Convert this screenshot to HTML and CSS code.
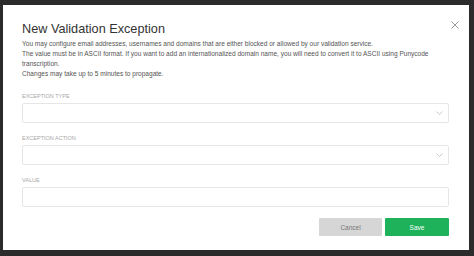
FILE: index.html
```html
<!DOCTYPE html>
<html lang="en">
  <head>
    <meta charset="UTF-8" />
    <title>New Validation Exception</title>
    <link rel="stylesheet" href="styles.css">
  </head>
  <body>
    <div class="modal">
      <button class="close-btn" aria-label="Close">
        <svg width="8" height="8" viewBox="0 0 8 8">
          <path d="M0.5 0.5 L7.5 7.5 M7.5 0.5 L0.5 7.5" stroke="#9a9a9a" stroke-width="1" fill="none" />
        </svg>
      </button>
      <h1 class="modal-title">New Validation Exception</h1>
      <div class="modal-desc">
        <p>You may configure email addresses, usernames and domains that are either blocked or allowed by our validation service.</p>
        <p>The value must be in ASCII format. If you want to add an internationalized domain name, you will need to convert it to ASCII using Punycode transcription.</p>
        <p>Changes may take up to 5 minutes to propagate.</p>
      </div>
      <div class="form-group">
        <label class="field-label">Exception Type</label>
        <div class="field select">
          <svg class="chevron" width="7" height="4" viewBox="0 0 7 4">
            <path d="M0.5 0.5 L3.5 3.5 L6.5 0.5" stroke="#bdbdbd" stroke-width="0.8" fill="none" />
          </svg>
        </div>
      </div>
      <div class="form-group">
        <label class="field-label">Exception Action</label>
        <div class="field select">
          <svg class="chevron" width="7" height="4" viewBox="0 0 7 4">
            <path d="M0.5 0.5 L3.5 3.5 L6.5 0.5" stroke="#bdbdbd" stroke-width="0.8" fill="none" />
          </svg>
        </div>
      </div>
      <div class="form-group">
        <label class="field-label">Value</label>
        <input class="field" type="text" />
      </div>
      <div class="modal-actions">
        <button class="btn btn-cancel">Cancel</button>
        <button class="btn btn-save">Save</button>
      </div>
    </div>
  </body>
</html>
```

FILE: styles.css
```css
* {
  box-sizing: border-box;
}
body {
  margin: 0;
  background: #2b2b2b;
  font-family: "Liberation Sans", Arial, sans-serif;
  height: 256px;
  overflow: hidden;
}
.modal {
  position: relative;
  background: #ffffff;
  width: 466px;
  height: 245px;
  margin: 5px 0 0 3px;
  padding: 16px 20px 0 19px;
}
.close-btn {
  position: absolute;
  top: 16px;
  right: 10px;
  border: none;
  background: none;
  padding: 0;
  line-height: 0;
}
.modal-title {
  margin: 0;
  font-size: 12.7px;
  font-weight: normal;
  line-height: 16px;
  color: #333333;
}
.modal-desc {
  margin-top: 2px;
  font-size: 6.55px;
  line-height: 10px;
  color: #555555;
}
.modal-desc p {
  margin: 0;
}
.form-group {
  margin-top: 13px;
}
.form-group + .form-group {
  margin-top: 11px;
}
.field-label {
  display: block;
  font-size: 5.5px;
  line-height: 8px;
  text-transform: uppercase;
  color: #a8a8a8;
  margin-bottom: 3px;
}
.field {
  display: block;
  width: 427px;
  height: 20px;
  border: 1px solid #e6e6e6;
  border-radius: 2px;
  background: #ffffff;
  padding: 0;
}
.select {
  display: flex;
  align-items: center;
  justify-content: flex-end;
  padding-right: 5px;
}
.modal-actions {
  display: flex;
  justify-content: flex-end;
  gap: 3px;
  margin-top: 11px;
  width: 427px;
}
.btn {
  border: none;
  border-radius: 1px;
  height: 18px;
  width: 64px;
  font-family: "Liberation Sans", Arial, sans-serif;
  font-size: 6.5px;
  padding: 0;
}
.btn-cancel {
  width: 63px;
  background: #d6d6d6;
  color: #777777;
}
.btn-save {
  background: #1eb25b;
  color: #ffffff;
}
```
